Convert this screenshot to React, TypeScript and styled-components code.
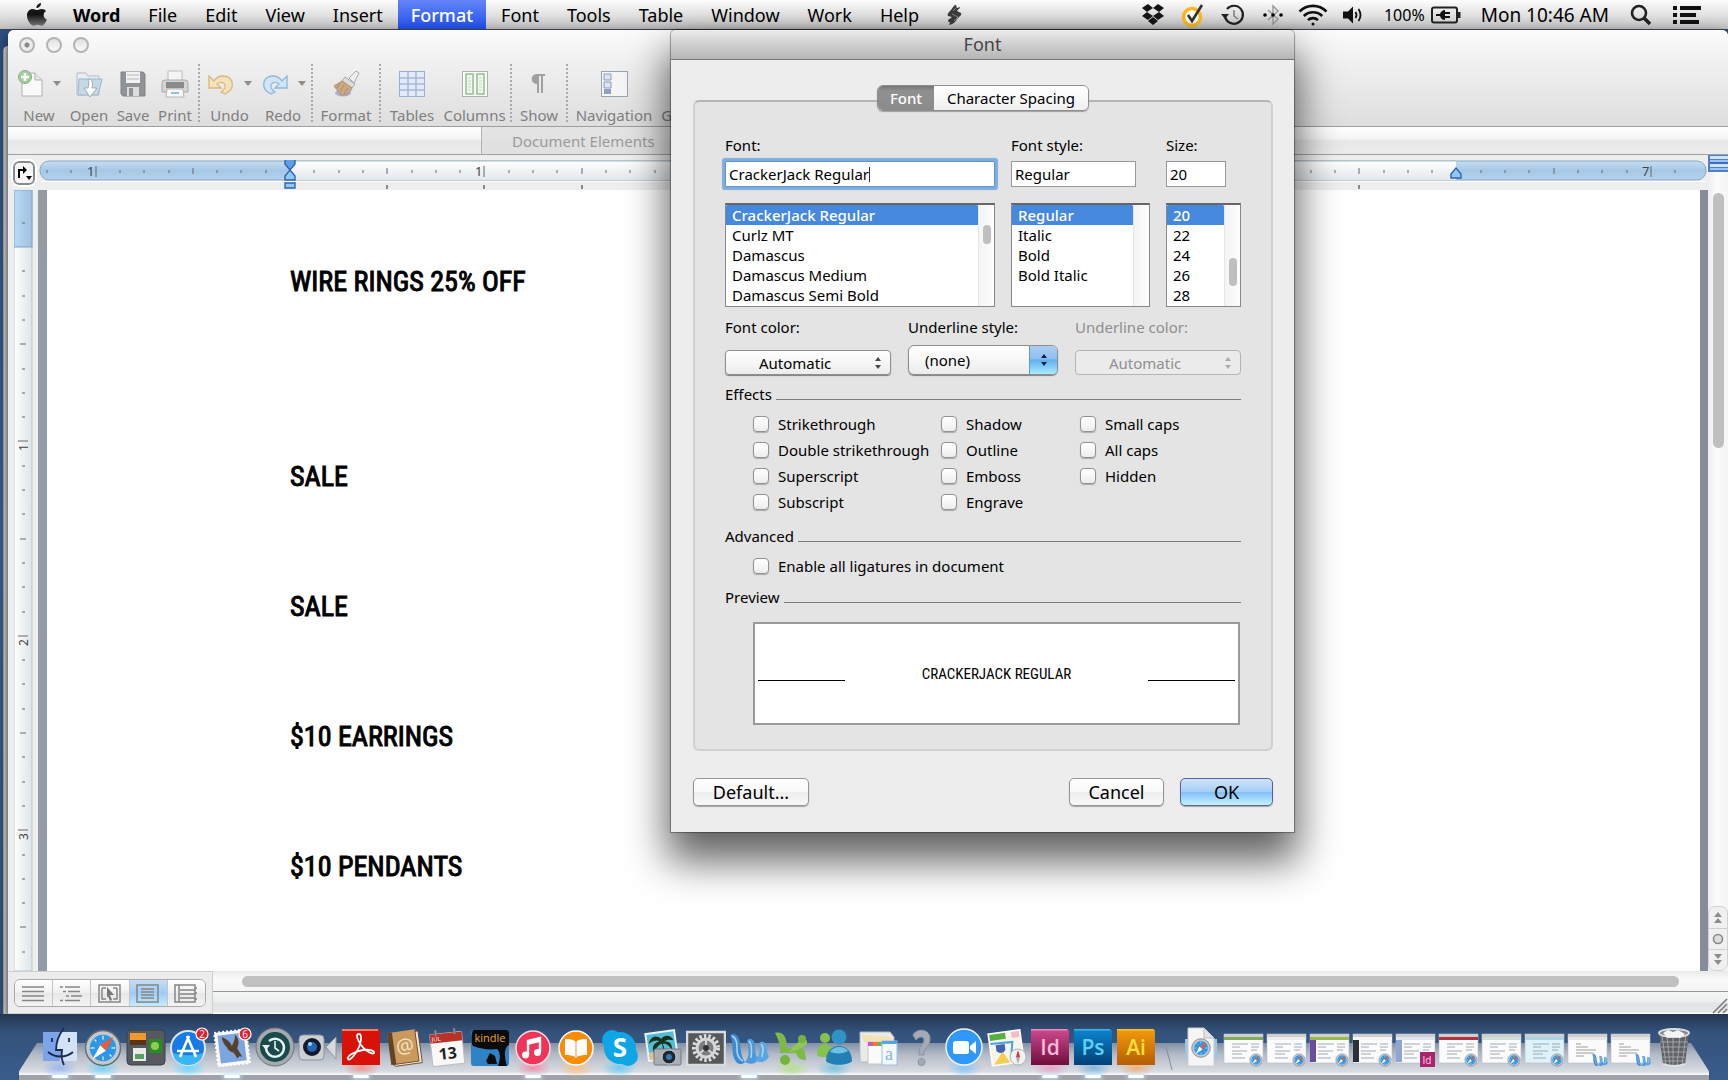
import React from "react";
import styled, { createGlobalStyle, css } from "styled-components";

const UI = `"Noto Sans", "Open Sans", "DejaVu Sans", sans-serif`;
const POSTER = `"Liberation Sans Narrow", "Roboto Condensed", "Liberation Sans", sans-serif`;

const GlobalStyle = createGlobalStyle`
  * { box-sizing: border-box; }
  body { margin: 0; font-family: ${UI}; color: #000; overflow: hidden; }
  button, input, select { font: inherit; color: inherit; margin: 0; }
  svg { display: block; flex: none; }
`;

/* ---------- Desktop ---------- */

const Desktop = styled.div`
  position: relative;
  min-height: 100vh;
  display: flex;
  flex-direction: column;
  background: linear-gradient(#2d5183, #3c6297 50%, #34567f 94%, #3c5f92);
`;

const MenuBar = styled.header`
  height: 30px;
  flex: none;
  display: flex;
  align-items: stretch;
  justify-content: space-between;
  background: linear-gradient(#fdfdfd, #e2e2e2 50%, #c3c3c3);
  border-bottom: 1px solid #3f4a55;
`;

const MenuGroup = styled.nav`
  display: flex;
  align-items: stretch;
  gap: 2px;
  padding-left: 24px;
`;

const MenuItem = styled.button<{ $bold?: boolean; $active?: boolean }>`
  border: 0;
  padding: 0 13px;
  font-size: 18px;
  line-height: 28px;
  font-weight: ${(p) => (p.$bold ? 700 : 400)};
  background: none;
  ${(p) =>
    p.$active &&
    css`
      color: #fff;
      font-weight: 500;
      background: linear-gradient(#6585f7, #2050f0);
    `}
`;

const IconButton = styled.button`
  border: 0;
  background: none;
  padding: 0;
  display: flex;
  align-items: center;
  justify-content: center;
`;

const AppleButton = styled(IconButton)`
  width: 34px;
  padding-right: 9px;
`;

const StatusGroup = styled.div`
  display: flex;
  align-items: center;
  padding-right: 21px;
`;

const StatusIcon = styled(IconButton)<{ $wide?: boolean }>`
  width: ${(p) => (p.$wide ? 52 : 40)}px;
`;

const Percent = styled.span`
  font-size: 16px;
  margin: 0 6px 0 11px;
`;

const Clock = styled.span`
  font-size: 19px;
  line-height: 28px;
  margin: 0 6px 0 20px;
`;

/* ---------- Document window ---------- */

const WindowStack = styled.main`
  flex: 1;
  display: flex;
  min-height: 0;
  padding-left: 3px;
`;

const BackWindowEdge = styled.div`
  width: 5px;
  margin-top: 16px;
  border-radius: 5px 0 0 0;
  background: linear-gradient(90deg, #9a9a9a, #e4e4e4 30%, #bdbdbd);
`;

const WordWindow = styled.section`
  flex: 1;
  min-width: 0;
  display: flex;
  flex-direction: column;
  background: #eee;
  border-radius: 6px 6px 0 0;
  box-shadow: 0 6px 16px rgba(0, 0, 0, 0.7);
`;

const WindowTop = styled.div`
  height: 97px;
  flex: none;
  display: flex;
  flex-direction: column;
  background: linear-gradient(#fbfbfb, #ededed 45%, #dedede);
  border-bottom: 1px solid #9d9d9d;
  border-radius: 6px 6px 0 0;
`;

const Lights = styled.div`
  display: flex;
  gap: 11px;
  padding: 7px 0 0 11px;
  height: 33px;
`;

const Light = styled.button<{ $dot?: boolean }>`
  width: 16px;
  height: 16px;
  padding: 0;
  border-radius: 50%;
  border: 2px solid #b4b4b4;
  background: ${(p) =>
    p.$dot
      ? "radial-gradient(circle, #888 2px, #ececec 3px)"
      : "linear-gradient(#e0e0e0, #fafafa)"};
`;

const Tools = styled.div`
  flex: 1;
  display: flex;
  padding-left: 4px;
  overflow: hidden;
`;

const Tool = styled.button<{ $w: number }>`
  width: ${(p) => p.$w}px;
  flex: none;
  border: 0;
  padding: 6px 0 0;
  background: none;
  display: flex;
  flex-direction: column;
  align-items: center;
  gap: 7px;
  color: #7f7f7f;
  font-size: 15px;
  line-height: 20px;
`;

const ToolIcon = styled.span`
  display: flex;
  align-items: center;
  justify-content: center;
  gap: 9px;
  height: 29px;
`;

const Caret = styled.span`
  border: 4px solid transparent;
  border-top: 5px solid #8d8d8d;
  border-bottom: 0;
`;

const Divider = styled.span`
  flex: none;
  width: 2px;
  height: 58px;
  margin: 1px 2px;
  border-left: 2px dotted #aaa;
`;

const ElementsBar = styled.div`
  height: 28px;
  flex: none;
  display: flex;
  justify-content: flex-start;
  background: linear-gradient(#fff, #f4f4f4 45%, #e8e8e8 50%, #ebebeb);
  border-bottom: 1px solid #a0a0a0;
`;

const ElementsTab = styled.button`
  margin-left: 473px;
  border: 0;
  border-left: 1px solid #b2b2b2;
  padding: 0 30px;
  background: linear-gradient(90deg, rgba(222, 222, 222, 0.8), rgba(222, 222, 222, 0.8) 200px, transparent 800px);
  color: #9b9b9b;
  font-size: 15px;
  line-height: 28px;
  white-space: nowrap;
  flex: 1;
  text-align: left;
`;

const Body = styled.div`
  flex: 1;
  min-height: 0;
  display: flex;
`;

const Work = styled.div`
  flex: 1;
  min-width: 0;
  display: flex;
  flex-direction: column;
`;

const RulerRow = styled.div`
  display: flex;
  height: 35px;
  flex: none;
  padding: 5px 0 0 5px;
  gap: 4px;
`;

const TabPicker = styled.button`
  width: 22px;
  height: 24px;
  margin: 1px 0 0;
  padding: 0;
  border: 2px solid #8a8a8a;
  border-radius: 6px;
  background: #f6f6f6;
  outline: 2px solid #fff;
  display: flex;
  align-items: center;
  justify-content: center;
`;

const RulerBox = styled.div`
  flex: 1;
  min-width: 0;
  overflow: hidden;
`;

const Canvas = styled.div`
  flex: 1;
  min-height: 0;
  display: flex;
`;

const SideRuler = styled.div`
  width: 30px;
  overflow: hidden;
  padding-left: 6px;
`;

const Page = styled.article`
  flex: 1;
  background: #fff;
  border-left: 9px solid #949aa6;
  border-right: 8px solid #868d99;
  padding: 59px 0 0 243px;
  font-family: ${POSTER};
  font-size: 28px;
`;

const Line = styled.p`
  margin: 0;
  height: 65px;
  line-height: 65px;
  -webkit-text-stroke: 1px #000;
`;

const ScrollColumn = styled.aside`
  width: 20px;
  display: flex;
  flex-direction: column;
  align-items: center;
  background: linear-gradient(90deg, #ededed, #fbfbfb 40%, #f5f5f5);
`;

const SplitHandle = styled.button`
  width: 20px;
  height: 17px;
  padding: 0;
  border: 2px solid #4c80ca;
  border-width: 1px 0 2px 2px;
  background: repeating-linear-gradient(#cfe4fb 0 3px, #4c80ca 3px 4px, #9cc4f2 4px 6px, #3c6fc2 6px 8px);
`;

const VThumb = styled.div`
  width: 11px;
  height: 255px;
  margin-top: 21px;
  border-radius: 6px;
  background: #bfbfbf;
`;

const Browse = styled.div`
  margin-top: auto;
  width: 20px;
  border: 1px solid #d2d2d2;
  border-radius: 7px;
  background: #f0f0f0;
  display: flex;
  flex-direction: column;
`;

const BrowseButton = styled(IconButton)`
  height: 21px;
  & + & {
    border-top: 1px solid #d0d0d0;
  }
`;

const Bottom = styled.footer`
  height: 43px;
  flex: none;
  display: flex;
`;

const Views = styled.div`
  width: 205px;
  border: 1px solid #cfcfcf;
  border-left: 0;
  background: #ececec;
  padding: 7px 6px 0 6px;
`;

const ViewGroup = styled.div`
  height: 28px;
  display: flex;
  border: 1px solid #aaa;
  border-radius: 6px;
  overflow: hidden;
`;

const ViewButton = styled(IconButton)<{ $on?: boolean }>`
  flex: 1;
  background: ${(p) =>
    p.$on
      ? "linear-gradient(#c7ddf5, #9fccf3 50%, #c4ecff)"
      : "linear-gradient(#fff, #f0f0f0 50%, #e8e8e8 52%, #f4f4f4)"};
  & + & {
    border-left: 1px solid #c4c4c4;
  }
`;

const BottomRight = styled.div`
  flex: 1;
  display: flex;
  flex-direction: column;
`;

const HTrack = styled.div`
  height: 21px;
  padding: 5px 49px 5px 29px;
  background: linear-gradient(#e9e9e9, #fafafa 40%, #f5f5f5);
  border-bottom: 1px solid #989898;
`;

const HThumb = styled.div`
  height: 11px;
  border-radius: 6px;
  background: #c0c0c0;
`;

const StatusBar = styled.div`
  flex: 1;
  display: flex;
  justify-content: flex-end;
  align-items: flex-end;
  background: linear-gradient(#f4f5f5, #eceeef 45%, #e1e3e5 50%, #e4e6e7 92%, #fff 96%);
`;

/* ---------- Font dialog ---------- */

const Dialog = styled.section`
  position: absolute;
  top: 30px;
  left: 671px;
  width: 623px;
  background: #ededed;
  border-radius: 5px 5px 0 0;
  box-shadow: 0 0 1px 1px rgba(0, 0, 0, 0.35), 0 25px 40px 4px rgba(0, 0, 0, 0.62);
  font-size: 15px;
  line-height: 20px;
`;

const DialogTitle = styled.h1`
  margin: 0;
  height: 30px;
  border-bottom: 1px solid #747474;
  border-radius: 5px 5px 0 0;
  background: linear-gradient(#ececec, #cfcfcf 50%, #b5b5b5);
  color: #454545;
  text-align: center;
  font-size: 18px;
  font-weight: 400;
  line-height: 29px;
`;

const DialogBody = styled.form`
  padding: 25px 21px 26px 22px;
`;

const TabRow = styled.div`
  position: relative;
  z-index: 1;
  display: flex;
  width: 212px;
  height: 26px;
  margin: 0 auto -11px;
  border: 1px solid #8d8d8d;
  border-radius: 6px;
  overflow: hidden;
  box-shadow: 0 1px 1px rgba(0, 0, 0, 0.3);
`;

const TabButton = styled.button<{ $on?: boolean }>`
  border: 0;
  padding: 0;
  flex: ${(p) => (p.$on ? "0 0 56px" : "1")};
  line-height: 23px;
  white-space: nowrap;
  font-weight: ${(p) => (p.$on ? 500 : 400)};
  color: ${(p) => (p.$on ? "#fff" : "#000")};
  background: ${(p) =>
    p.$on ? "linear-gradient(#757575, #909090 20%, #8b8b8b)" : "linear-gradient(#fff, #f8f8f8 50%, #efefef)"};
`;

const Panel = styled.div`
  border: 2px solid #d0d0d0;
  border-top-color: #b4b4b4;
  border-radius: 6px;
  background: #e4e4e4;
  padding: 33px 30px 24px 30px;
`;

const Fields = styled.div`
  display: grid;
  grid-template-columns: 270px 139px 75px;
  column-gap: 16px;
`;

const Field = styled.div`
  display: flex;
  flex-direction: column;
`;

const Label = styled.label<{ $dim?: boolean }>`
  color: ${(p) => (p.$dim ? "#8f8f8f" : "#000")};
  white-space: nowrap;
`;

const TextBox = styled.div<{ $right?: number; $focus?: boolean }>`
  display: flex;
  align-items: center;
  height: 26px;
  margin: 6px ${(p) => p.$right || 0}px 16px 0;
  padding-left: 3px;
  border: 1px solid #999;
  background: #fff;
  ${(p) =>
    p.$focus &&
    css`
      border-color: #5d95cd;
      border-radius: 1px;
      box-shadow: 0 0 1px 3px rgba(94, 155, 216, 0.75);
    `}
`;

const TextInput = styled.input`
  border: 0;
  outline: 0;
  padding: 0;
  background: none;
  field-sizing: content;
  max-width: 100%;
`;

const InsertionPoint = styled.i`
  width: 1px;
  height: 15px;
  background: #333;
`;

const ListBox = styled.div`
  display: flex;
  height: 104px;
  border: 1px solid #888;
  border-top: 2px solid #666;
  background: #fff;
`;

const List = styled.select`
  flex: 1;
  min-width: 0;
  height: 101px;
  padding: 0;
  border: 0;
  outline: 0;
  overflow: hidden;
  background: #fff;
  scrollbar-width: none;
  option {
    padding: 0 6px;
    min-height: 20px;
    height: 20px;
    line-height: 20px;
  }
  option:checked {
    color: #fff;
    font-weight: 500;
    background: #4688de linear-gradient(#4688de, #4688de);
  }
`;

const ListTrack = styled.div<{ $top?: number }>`
  width: 16px;
  border-left: 1px solid #e6e6e6;
  background: linear-gradient(90deg, #f4f4f4, #fdfdfd);
  padding: ${(p) => p.$top || 0}px 3px 0 4px;
`;

const ListThumb = styled.div<{ $h: number }>`
  height: ${(p) => p.$h}px;
  border-radius: 4px;
  background: #bfbfbf;
`;

const Popups = styled.div`
  display: grid;
  grid-template-columns: 166px 150px 166px;
  column-gap: 17px;
  padding-top: 10px;
`;

const PopupShell = styled.div<{ $kind?: "aqua" | "dim" }>`
  display: flex;
  align-items: center;
  height: ${(p) => (p.$kind === "aqua" ? 30 : 25)}px;
  margin-top: ${(p) => (p.$kind === "aqua" ? 8 : 13)}px;
  border: 1px solid ${(p) => (p.$kind === "dim" ? "#b4b4b4" : "#8f8f8f")};
  border-radius: ${(p) => (p.$kind === "aqua" ? 6 : 4)}px;
  background: ${(p) => (p.$kind === "dim" ? "#ebebeb" : "linear-gradient(#fff, #f6f6f6 50%, #ececec)")};
  color: ${(p) => (p.$kind === "dim" ? "#909090" : "#000")};
  box-shadow: ${(p) => (p.$kind === "dim" ? "none" : "0 1px 1px rgba(0,0,0,.45)")};
  overflow: hidden;
`;

const Popup = styled.select<{ $pad: number }>`
  flex: 1;
  min-width: 0;
  height: 100%;
  appearance: none;
  border: 0;
  outline: 0;
  opacity: 1;
  padding: 0 0 0 ${(p) => p.$pad}px;
  background: none;
  color: inherit;
`;

const PopupArrows = styled.span<{ $aqua?: boolean }>`
  display: flex;
  align-items: center;
  justify-content: center;
  height: 100%;
  width: ${(p) => (p.$aqua ? 28 : 24)}px;
  color: ${(p) => (p.$aqua ? "#10203a" : "inherit")};
  opacity: ${(p) => (p.$aqua ? 1 : 0.7)};
  background: ${(p) => (p.$aqua ? "linear-gradient(#a9cdf3, #8fc0f2 45%, #62aef0 50%, #a8ecff)" : "none")};
  border-left: ${(p) => (p.$aqua ? "1px solid #6595ce" : "0")};
`;

const SectionTitle = styled.h2<{ $top: number }>`
  margin: ${(p) => p.$top}px 0 0;
  display: flex;
  align-items: flex-end;
  gap: 4px;
  font-size: 15px;
  font-weight: 400;
  line-height: 20px;
  &::after {
    content: "";
    flex: 1;
    height: 2px;
    margin-bottom: 4px;
    border-bottom: 1px solid #7d7d7d;
  }
`;

const Effects = styled.div`
  display: grid;
  grid-template-columns: 188px 139px 1fr;
  grid-template-rows: repeat(4, 26px);
  grid-auto-flow: column;
  padding: 7px 0 0 28px;
`;

const Check = styled.label`
  display: flex;
  align-items: center;
  gap: 9px;
  height: 26px;
  white-space: nowrap;
`;

const CheckBox = styled.input`
  appearance: none;
  width: 16px;
  height: 16px;
  flex: none;
  border: 1px solid #929292;
  border-radius: 4px;
  background: linear-gradient(#fff, #f7f7f7 50%, #ececec);
  box-shadow: 0 1px 1px rgba(0, 0, 0, 0.25);
`;

const Advanced = styled.div`
  padding: 7px 0 0 28px;
`;

const Preview = styled.div`
  display: flex;
  align-items: center;
  justify-content: space-between;
  height: 103px;
  margin: 15px 1px 0 28px;
  padding: 0 3px;
  border: 2px solid #9a9a9a;
  background: #fff;
  font-family: ${POSTER};
  font-size: 15px;
`;

const Baseline = styled.span`
  width: 87px;
  height: 1px;
  margin-top: 14px;
  background: #000;
`;

const Buttons = styled.div`
  display: flex;
  gap: 16px;
  padding-top: 27px;
`;

const PushButton = styled.button<{ $w: number; $primary?: boolean; $start?: boolean }>`
  width: ${(p) => p.$w}px;
  height: 28px;
  padding: 0;
  margin-right: ${(p) => (p.$start ? "auto" : "0")};
  border: 1px solid ${(p) => (p.$primary ? "#5762a8" : "#949494")};
  border-radius: 5px;
  font-size: 18px;
  line-height: 24px;
  background: ${(p) =>
    p.$primary
      ? "linear-gradient(#cfe3fa, #a6cff8 48%, #84c0f8 52%, #c3f4ff)"
      : "linear-gradient(#fff, #f8f8f8 48%, #eee 52%, #f8f8f8)"};
  box-shadow: 0 1px 1px rgba(0, 0, 0, 0.3);
`;

/* ---------- Dock ---------- */

const DockBar = styled.nav`
  position: relative;
  height: 66px;
  flex: none;
  display: flex;
  padding: 13px 32px 0 38px;
  background: linear-gradient(#24364f, #34537c 28%, #3a5c8b);
  &::before {
    content: "";
    position: absolute;
    inset: 29px 19px 5px;
    background: linear-gradient(#8190a6, #b3bac6 35%, #d9dde3 90%, #fff);
    clip-path: polygon(18px 0, calc(100% - 18px) 0, 100% 88%, 100% 100%, 0 100%, 0 88%);
  }
  &::after {
    content: "";
    position: absolute;
    inset: 61px 19px 0;
    background: #9fa3a9;
  }
`;

const DockItem = styled.button<{ $glow?: string; $running?: boolean }>`
  position: relative;
  z-index: 1;
  flex: 1;
  min-width: 0;
  height: 53px;
  padding: 0;
  border: 0;
  background: ${(p) =>
    p.$glow ? `radial-gradient(ellipse 18px 9px at 50% 41px, ${p.$glow}, transparent)` : "none"};
  display: flex;
  flex-direction: column;
  align-items: center;
  justify-content: space-between;
  &::after {
    content: "";
    width: 16px;
    height: 3px;
    margin-bottom: 2px;
    border-radius: 2px;
    ${(p) => p.$running && "background: #fff; box-shadow: 0 0 4px 1px #bfe6ff;"}
  }
`;

const DockGap = styled.span`
  position: relative;
  z-index: 1;
  width: 21px;
  display: flex;
  justify-content: center;
  padding-top: 20px;
`;

/* ---------- Small drawings ---------- */

const Apple = () => (
  <svg width="22" height="26" viewBox="0 0 22 26">
    <defs>
      <linearGradient id="ap" x1="0" y1="0" x2="0" y2="1">
        <stop offset="0" stopColor="#222" />
        <stop offset=".5" stopColor="#111" />
        <stop offset="1" stopColor="#777" />
      </linearGradient>
    </defs>
    <path d="M15 1c.3 2.600-2 5.200-4.500 5C10.200 3.500 12.500 1.200 15 1zM20 9c-3.500 2-3 7 .8 8.500-1 3-3 6.200-5.300 6.200-1.500 0-2-.9-3.900-.9s-2.500.9-4 .9C4.500 23.700 1 18 1 13.500 1 9.500 3.600 7 6.700 7c1.700 0 3 1.100 4.300 1.100C12.200 8.100 13.700 7 16 7c1.600 0 3.100.8 4 2z" fill="url(#ap)" />
  </svg>
);

const ScriptGlyph = () => (
  <svg width="18" height="24" viewBox="0 0 18 24">
    <path d="M11 2C9 2 8 4 6 7 3 10 2 11 3 13l4 1c-2 2-4 2-4 4 0 1 1 1 2 1l-1 3c5-1 7-4 8-6 3-3 5-4 4-6l-4-2c1-2 3-2 3-4L12 5z" fill="#3a3a3a" />
    <path d="m7 11 6 3-4 4M8 8l4-4" stroke="#999" fill="none" strokeWidth=".8" />
  </svg>
);

const Dropbox = () => (
  <svg width="24" height="22" viewBox="0 0 24 22" fill="#151515">
    <path d="m7 0 5 4-6 4L1 4zM17 0l-5 4 6 4 5-4zM6 8l6 4-5 4-6-4zM18 8l-6 4 5 4 6-4zM12 13l5 4-5 4-5-4z" />
  </svg>
);

const Norton = () => (
  <svg width="24" height="26" viewBox="0 0 24 26">
    <circle cx="11" cy="15" r="8.500" fill="#fff" stroke="#fdbb1e" strokeWidth="3.500" />
    <path d="m7 13 4 6L21 3" stroke="#333" strokeWidth="2.600" fill="none" />
  </svg>
);

const TimeMachineGlyph = () => (
  <svg width="24" height="24" viewBox="0 0 24 24" fill="none" stroke="#222" strokeWidth="2.200">
    <path d="M4 13a9 9 0 1 0 2-7" />
    <path d="m0 11 4 5 4-5z" fill="#222" stroke="none" />
    <path d="M13 7v6l4 3" strokeWidth="1.400" stroke="#777" />
  </svg>
);

const Bluetooth = () => (
  <svg width="20" height="24" viewBox="0 0 20 24">
    <path d="m5 7 10 9-5 5V3l5 5-10 9" stroke="#999" strokeWidth="1.400" fill="none" />
    <circle cx="2" cy="12" r="1.800" />
    <circle cx="10" cy="12" r="1.800" />
    <circle cx="18" cy="12" r="1.800" />
  </svg>
);

const Wifi = () => (
  <svg width="30" height="22" viewBox="0 0 30 22" fill="none" stroke="#111" strokeWidth="2.600">
    <path d="M1.500 7.500a19 19 0 0 1 27 0M5.800 12a13 13 0 0 1 18.400 0M10 16.200a7 7 0 0 1 10 0" />
    <circle cx="15" cy="20" r="1.500" fill="#111" stroke="none" />
  </svg>
);

const Volume = () => (
  <svg width="22" height="20" viewBox="0 0 22 20">
    <path d="M1 6.500h5l5-5v17l-5-5H1z" fill="#111" />
    <path d="M13.500 7q2 3 0 6M16.500 4q4 6 0 12" stroke="#111" strokeWidth="1.800" fill="none" />
  </svg>
);

const Battery = () => (
  <svg width="30" height="18" viewBox="0 0 30 18">
    <rect x="1" y="1.500" width="25" height="15" rx="2" fill="none" stroke="#222" strokeWidth="2" />
    <rect x="27" y="6" width="2.500" height="6" fill="#222" />
    <path d="M5 8h4c1-3 3-4 5-4v2h5v2h-5v2h5v2h-5v2c-2 0-4-1-5-4H5z" fill="#111" />
  </svg>
);

const Search = () => (
  <svg width="22" height="22" viewBox="0 0 22 22" fill="none" stroke="#222" strokeWidth="2.600">
    <circle cx="9" cy="9" r="7" />
    <path d="m14 14 6 6" strokeWidth="3.500" />
  </svg>
);

const ListGlyph = () => (
  <svg width="28" height="20" viewBox="0 0 28 20" fill="#111">
    <path d="M0 1h4v4H0zM0 8h4v4H0zM0 15h4v4H0zM7 1h21v4H7zM7 8h16v4H7zM7 15h19v4H7z" />
  </svg>
);

const toolIcons: Record<string, React.ReactNode> = {
  New: (
    <svg width="26" height="28" viewBox="0 0 26 28">
      <path d="M4 3h13l7 7v16H4z" fill="#fafafa" stroke="#b0b0b0" />
      <path d="M17 3v7h7" fill="#e6e6e6" stroke="#b0b0b0" />
      <circle cx="7" cy="7" r="6.500" fill="#a3cd9d" stroke="#86b083" />
      <path d="M7 3v8M3 7h8" stroke="#fff" strokeWidth="2.500" />
    </svg>
  ),
  Open: (
    <svg width="28" height="28" viewBox="0 0 28 28">
      <path d="M2 3h9l2 3h11v19H2z" fill="#e9edf1" stroke="#b3bdc7" />
      <path d="M4 9h23l-4 16H3z" fill="#c3d9e8" stroke="#9fb8ca" />
      <path d="M13 9c5 0 5 5 4 9h5l-7 9-6-9h4c1-4 1-7 0-9z" fill="#fff" stroke="#aaa" />
    </svg>
  ),
  Save: (
    <svg width="26" height="26" viewBox="0 0 26 26">
      <path d="M1 1h22l2 2v22H3l-2-2z" fill="#8f9296" stroke="#808387" />
      <path d="M6 1h14v11H6z" fill="#f2f2f2" />
      <path d="M7 4h12M7 8h12" stroke="#b5b5b5" />
      <path d="M7 16h12v9H7z" fill="#dcdcdc" />
      <path d="M9 17h4v8H9z" fill="#8f9296" />
    </svg>
  ),
  Print: (
    <svg width="28" height="28" viewBox="0 0 28 28">
      <path d="M7 1h14v11H7z" fill="#f4f4f4" stroke="#bbb" />
      <path d="M1 13q0-3 3-3h20q3 0 3 3v9H1z" fill="#d4d4d4" stroke="#aaa" />
      <path d="M5 12h18v6H5z" fill="#8a8a8a" />
      <path d="M6 19h16l1 8H5z" fill="#fafafa" stroke="#b5b5b5" />
      <path d="M10 22h8v2h-8z" fill="#8fc6dd" />
    </svg>
  ),
  Undo: (
    <svg width="28" height="22" viewBox="0 0 28 22">
      <path d="M2 3v12h12l-4-4c7-5 12 3 4 8l4 2C29 16 27 3 16 3c-4 0-7 2-9 5z" fill="#f4e2bb" stroke="#d8b880" strokeWidth="1.300" />
    </svg>
  ),
  Redo: (
    <svg width="28" height="22" viewBox="0 0 28 22">
      <path d="M26 3v12H14l4-4C11 6 6 14 14 19l-4 2C-1 16 1 3 12 3c4 0 7 2 9 5z" fill="#d0e6f6" stroke="#8fb8da" strokeWidth="1.300" />
    </svg>
  ),
  Format: (
    <svg width="28" height="28" viewBox="0 0 28 28">
      <ellipse cx="11" cy="23" rx="8" ry="3.500" fill="#aab0e0" />
      <path d="m17 8 7-7 3 2-5 10z" fill="#eee" stroke="#aaa" />
      <path d="m13 7 10 7-3 4-10-7z" fill="#dcdcdc" stroke="#aaa" />
      <path d="m10 11 10 7c-2 5-6 8-11 7L2 16z" fill="#cba985" stroke="#b29274" />
      <path d="m8 13-3 5m7-3-4 7m8-4-4 6" stroke="#a98a6d" />
    </svg>
  ),
  Tables: (
    <svg width="26" height="26" viewBox="0 0 26 26">
      <rect x=".5" y=".5" width="25" height="25" fill="#e2ebf7" stroke="#98aed2" />
      <path d="M9 1v25M17 1v25M1 7h25M1 13h25M1 19h25" stroke="#a5b9dc" strokeWidth="1.500" />
    </svg>
  ),
  Columns: (
    <svg width="26" height="26" viewBox="0 0 26 26">
      <rect x=".5" y=".5" width="25" height="25" fill="#fafafa" stroke="#aab5aa" />
      <path d="M4 3h7v20H4zM15 3h7v20h-7z" fill="#f1f8ef" stroke="#91bf8c" strokeWidth="1.500" />
      <path d="M6 7h3M6 10h3M6 13h3M6 16h3M6 19h3M17 7h3M17 10h3M17 13h3M17 16h3M17 19h3" stroke="#bcd9b9" />
    </svg>
  ),
  Show: (
    <svg width="16" height="22" viewBox="0 0 16 22">
      <path d="M14 1v2h-2v17h-2V3H8v17H6v-9C-1 11-1 1 6 1z" fill="#a0a0a0" />
    </svg>
  ),
  Navigation: (
    <svg width="27" height="26" viewBox="0 0 27 26">
      <rect x=".5" y=".5" width="26" height="25" fill="#f5f5f5" stroke="#9aa3b5" />
      <path d="M3 3h7v6H3zM3 11h7v6H3z" fill="#dbe4f3" stroke="#8c9cbd" />
      <path d="M3 18h7v5H3z" fill="#8ea0c8" />
    </svg>
  ),
};

const tools: Array<{ name: string; w: number; caret?: boolean; gap?: boolean }> = [
  { name: "New", w: 54, caret: true },
  { name: "Open", w: 46 },
  { name: "Save", w: 42 },
  { name: "Print", w: 42, gap: true },
  { name: "Undo", w: 55, caret: true },
  { name: "Redo", w: 52, caret: true, gap: true },
  { name: "Format", w: 62, gap: true },
  { name: "Tables", w: 58 },
  { name: "Columns", w: 67, gap: true },
  { name: "Show", w: 50, gap: true },
  { name: "Navigation", w: 88 },
  { name: "Gallery", w: 56 },
];

/* Rulers: 24.3 px per eighth of an inch */
const EIGHTH = 24.3;

const HorizontalRuler = () => {
  const zero = 251;
  const marks = Array.from({ length: 70 }, (_, i) => i - 10);
  const x = (k: number) => Math.round(zero + k * EIGHTH);
  return (
    <svg width="100%" height="30" fontSize="13" fontFamily="Noto Sans, sans-serif">
      <defs>
        <linearGradient id="rb" x1="0" y1="0" x2="0" y2="1">
          <stop offset="0" stopColor="#c5dff4" />
          <stop offset=".5" stopColor="#a6c8e6" />
          <stop offset="1" stopColor="#b3d2ec" />
        </linearGradient>
        <linearGradient id="rw" x1="0" y1="0" x2="0" y2="1">
          <stop offset="0" stopColor="#fff" />
          <stop offset="1" stopColor="#e2e8ec" />
        </linearGradient>
      </defs>
      <rect x="1" y="1" width="1666" height="19" rx="9" fill="url(#rb)" stroke="#8aa9c8" />
      <rect x={zero} y="1" width="1166" height="19" fill="url(#rw)" />
      <path d={`M${zero} 1h1166`} stroke="#b0bac4" />
      <path d="M2 21.500h1664" stroke="#fff" />
      {marks.map((k) => {
        const at = x(k);
        if (k === 0 || k === 48 || at > 1658) return null;
        if (k % 8 === 0)
          return (
            <g key={k}>
              <path d={`M${at} 6v11`} stroke="#666" />
              {[-8, 8, 56].includes(k) && (
                <text x={at - 9} y="16" fill="#444">
                  {Math.abs(k / 8)}
                </text>
              )}
            </g>
          );
        return <path key={k} d={k % 4 === 0 ? `M${at} 8v6` : `M${at} 10v3`} stroke="#667" />;
      })}
      {marks
        .filter((k) => k > 0 && k < 48 && k % 4 === 0)
        .map((k) => (
          <path key={k} d={`M${x(k)} 25v4`} stroke="#667" strokeWidth="1.500" />
        ))}
      <g stroke="#2f64ab" strokeWidth="1.400" fill="#8ec7f8">
        <path d={`M${zero - 5} -1h10v5l-5 6-5-6z`} fill="#5d9fe8" />
        <path d={`M${zero} 10l5 6v4h-10v-4z`} />
        <path d={`M${zero - 5} 23h10v5h-10z`} />
        <path d={`M${zero + 1166} 8l5 6v4h-10v-4z`} />
      </g>
    </svg>
  );
};

const VerticalRuler = () => {
  const zero = 57;
  const marks = Array.from({ length: 34 }, (_, i) => i - 2);
  return (
    <svg width="19" height="781" fontSize="12" fontFamily="Noto Sans, sans-serif">
      <defs>
        <linearGradient id="vb">
          <stop offset="0" stopColor="#b9dbf5" />
          <stop offset="1" stopColor="#9fc0df" />
        </linearGradient>
        <linearGradient id="vw">
          <stop offset="0" stopColor="#fff" />
          <stop offset="1" stopColor="#dde4e8" />
        </linearGradient>
      </defs>
      <rect width="18" height="781" fill="url(#vw)" stroke="#bcc3c8" />
      <rect width="18" height={zero} fill="url(#vb)" stroke="#7fa5c9" />
      {marks.map((k) => {
        const at = Math.round(zero + k * EIGHTH);
        if (k === 0 || at < 10) return null;
        if (k % 8 === 0)
          return (
            <g key={k}>
              <path d={`M4 ${at}h10`} stroke="#666" />
              <text transform={`translate(14 ${at + 10}) rotate(-90)`} fill="#444">
                {k / 8}
              </text>
            </g>
          );
        return <path key={k} d={k % 4 === 0 ? `M6 ${at}h6` : `M8 ${at}h3`} stroke="#666" />;
      })}
    </svg>
  );
};

const viewIcons: Array<[string, React.ReactNode]> = [
  ["Draft view", <path key="p" d="M0 3h22M0 7.500h22M0 12h22M0 16.500h22" />],
  ["Outline view", <path key="p" d="M0 3h3m2 0h15M3 7.500h3m2 0h12M6 12h3m2 0h11M0 16.500h3m2 0h15" />],
  [
    "Publishing layout view",
    <g key="p">
      <path d="M1 1h21v17H1zM4 4h4M15 4h4M4 4v11h4M19 4v11h-4" />
      <path d="m9 3 7 8h-4l2 5-2 1-2-5-1 2z" fill="#777" stroke="none" />
    </g>,
  ],
  ["Print layout view", <path key="p" d="M1 1h21v17H1zM5 5h13M5 8h13M5 11h13M5 14h13" />],
  ["Notebook layout view", <path key="p" d="M1 1h20v17H1zM5 1v17M6 6h15M6 10h15M6 14h15M21 4h2M21 9h2M21 15h2" />],
];

const Arrows = () => (
  <svg width="8" height="14" viewBox="0 0 8 14" fill="currentColor">
    <path d="M4 1l3 4H1zM4 13l3-4H1z" />
  </svg>
);

/* ---------- Dock artwork ---------- */

const Art = ({ children, w = 40 }: { children: React.ReactNode; w?: number }) => (
  <svg width={w} height="40" viewBox={`0 0 ${w} 40`} fontFamily="Open Sans, Noto Sans, sans-serif">
    {children}
  </svg>
);

const Compass = ({ x, y, r }: { x: number; y: number; r: number }) => (
  <g transform={`translate(${x} ${y}) scale(${r / 18})`}>
    <circle r="16" fill="#2e96e6" stroke="#c3c8cd" strokeWidth="4" />
    <circle r="18.500" fill="none" stroke="#666c72" strokeWidth="1.500" />
    <path d="M0-13v4M0 9v4M-13 0h4M9 0h4M-9-9l2 2M9 9l-2-2M-9 9l2-2" stroke="#cfeaff" strokeWidth="1.500" />
    <path d="M11-12 3 3-3-3z" fill="#f05a2c" />
    <path d="M-11 12-3-3 3 3z" fill="#fff" />
  </g>
);

const Badge = ({ n }: { n: number }) => (
  <g>
    <circle cx="33" cy="7" r="6" fill="#e0212b" stroke="#fff" strokeWidth="1.200" />
    <text x="33" y="11" fontSize="10" fill="#fff" textAnchor="middle">
      {n}
    </text>
  </g>
);

const AdobeTile = ({ text, top, bottom, color }: { text: string; top: string; bottom: string; color: string }) => (
  <Art>
    <defs>
      <linearGradient id={`tile${text}`} x1="0" y1="0" x2="0" y2="1">
        <stop offset="0" stopColor={top} />
        <stop offset="1" stopColor={bottom} />
      </linearGradient>
    </defs>
    <path d="M1 2h37v1h1v35H1z" fill={`url(#tile${text})`} />
    <path d="M1 2h36v1.500H1z" fill={color} opacity=".6" />
    <text x="20" y="28" fontSize="21" fontWeight="600" fill={color} textAnchor="middle">
      {text}
    </text>
  </Art>
);

/* The Office "W": three teeth of falling height joined along a curved foot */
const WordMark = () => (
  <g>
    <path d="M1 6C6 3 10 7 11 14c1 7 1 14 5 19-4 4-9 2-11-4C2 21 5 13 1 6z" fill="#3f8bd0" />
    <path d="M18 11c4-3 8 0 8 7 0 6 1 9 4 12-3 5-9 6-14 3 5-5 4-14 2-22z" fill="#4c99dc" />
    <path d="M30 14c4-3 8 0 8 5 0 4 0 6 2 8-2 6-9 8-14 4 5-4 5-10 4-17z" fill="#5aa6e4" />
    <path d="M3 7c5 2 5 8 5 14 0 5 2 9 6 11M20 12c3 3 3 10 2 17M32 15c3 3 2 8 1 13" stroke="#a9d6f8" strokeWidth="1.500" fill="none" />
  </g>
);

const Thumb = ({ bar, side, page = "#fbfbfb", kind }: { bar: string; side?: string; page?: string; kind: "safari" | "id" | "word" }) => (
  <Art w={42}>
    <rect x="1" y="7" width="39" height="29" fill={page} stroke="#b7bcc2" strokeWidth=".6" />
    <rect x="1" y="7" width="39" height="3" fill="#cfcfcf" />
    <rect x="1" y="10" width="39" height="3" fill={bar} />
    {side && <rect x="1" y="13" width="6" height="22" fill={side} />}
    {kind === "word" ? (
      <path d="M9 17h5M9 20h12M9 23h20M9 26h18M9 29h8" stroke="#888" strokeWidth=".8" />
    ) : (
      <path d="M9 17h16M9 20h8M9 24h15M9 27h10M9 31h13M28 17h8M28 20h8M28 23h6" stroke="#8b94a8" strokeWidth=".8" />
    )}
    {kind === "safari" && <Compass x={33} y={33} r={6} />}
    {kind === "id" && (
      <g>
        <rect x="25" y="25" width="15" height="15" fill="#a8276c" />
        <text x="32" y="37" fontSize="10" fill="#ffd0e8" textAnchor="middle">
          Id
        </text>
      </g>
    )}
    {kind === "word" && (
      <g transform="translate(25 25) scale(.4)">
        <WordMark />
      </g>
    )}
  </Art>
);

const dockApps: Array<{ name: string; art: React.ReactNode; glow?: string; running?: boolean }> = [
  {
    name: "Finder",
    running: true,
    glow: "#9db8f0",
    art: (
      <Art>
        <rect x="3" y="5" width="34" height="29" fill="#7da3e8" />
        <path d="M22 5h15v29H20c1-4 1-8 1-10h-5c0-7 2-14 6-19z" fill="#d3e2f8" />
        <path d="M24 1c-6 8-8 15-8 22h6c-1 6 0 11 2 15M12 11v4M29 11v4M8 25c7 6 18 6 25 0" stroke="#1b2a50" strokeWidth="1.800" fill="none" />
      </Art>
    ),
  },
  { name: "Safari", running: true, glow: "#78d0f4", art: <Art><Compass x={20} y={21} r={17} /></Art> },
  {
    name: "Dashboard",
    art: (
      <Art>
        <rect x="1" y="3" width="38" height="35" rx="4" fill="#565a60" stroke="#3c4046" />
        <rect x="4" y="6" width="16" height="12" fill="#f09a2e" />
        <path d="M4 13h16v5H4z" fill="#5b3213" />
        <rect x="23" y="12" width="13" height="14" fill="#2c8a22" />
        <circle cx="29" cy="19" r="4" fill="#8ccf50" />
        <rect x="7" y="21" width="13" height="13" fill="#e8ece8" />
        <path d="M9 27h9v5H9z" fill="#56a060" />
      </Art>
    ),
  },
  {
    name: "App Store",
    glow: "#6fd8fb",
    art: (
      <Art>
        <circle cx="19" cy="21" r="17" fill="#167be6" stroke="#dfe5ea" strokeWidth="2" />
        <path d="M4 26a15 12 0 0 0 30 0c-8 3-22 3-30 0z" fill="#38b6f6" />
        <path d="m20 9-9 21M18 9l9 21M8 24h22" stroke="#fff" strokeWidth="2.600" />
        <Badge n={2} />
      </Art>
    ),
  },
  {
    name: "Mail",
    running: true,
    art: (
      <Art>
        <g transform="rotate(-7 20 20)">
          <rect x="4" y="4" width="32" height="34" fill="#f8f8f8" stroke="#fff" strokeWidth="2" strokeDasharray="2 2" />
          <rect x="7" y="7" width="26" height="28" fill="#7ea6de" />
          <path d="M11 9c5 2 8 6 9 10 3-4 5-9 4-11 4 4 4 9 1 14l4 9-3-1-2 2-3-6c-3-1-5-3-6-6-2-3-4-6-4-11z" fill="#54412e" />
        </g>
        <Badge n={6} />
      </Art>
    ),
  },
  {
    name: "Time Machine",
    art: (
      <Art>
        <circle cx="20" cy="20" r="17" fill="#1c4a4c" stroke="#a5aaae" strokeWidth="4" />
        <circle cx="20" cy="20" r="19" fill="none" stroke="#6e7377" />
        <g fill="none" stroke="#e3f4f2" strokeWidth="2.400">
          <path d="M11 21a9 9 0 1 0 3-7" />
          <path d="M20 14v7l4 3" strokeWidth="1.600" />
          <path d="m7 18 4 5 4-5z" fill="#e3f4f2" stroke="none" />
        </g>
      </Art>
    ),
  },
  {
    name: "FaceTime",
    art: (
      <Art>
        <rect x="1" y="8" width="25" height="25" rx="4" fill="#cdd0d3" stroke="#8e9296" />
        <path d="m28 20 10-10v22z" fill="#d7dadd" stroke="#94989c" />
        <circle cx="14" cy="20" r="9" fill="#111a2c" />
        <circle cx="14" cy="20" r="5" fill="#2765b8" />
        <circle cx="12" cy="17" r="2" fill="#9bd0ff" />
      </Art>
    ),
  },
  {
    name: "Acrobat",
    running: true,
    glow: "#f0968e",
    art: (
      <Art>
        <path d="M1 2h36l2 1v35H1z" fill="#d81208" />
        <path d="M1 2h36v2H1z" fill="#ff7a65" />
        <path d="M17 7c5-1 3 8 1 13S9 35 7 32s8-8 15-9 12 1 11 3-9-2-13-8-5-10-3-11z" stroke="#fff" strokeWidth="1.800" fill="none" />
      </Art>
    ),
  },
  {
    name: "Contacts",
    art: (
      <Art>
        <g transform="rotate(-8 20 20)">
          <path d="M5 4h28v32H5z" fill="#c99a5b" />
          <path d="M5 4h5v32H5z" fill="#644427" />
          <path d="M33 6h3v32H9l-2-2h26z" fill="#eee6d8" stroke="#5e3c1e" strokeWidth=".8" />
          <text x="21" y="26" fontSize="20" fill="#f3e3c5" textAnchor="middle">
            @
          </text>
        </g>
      </Art>
    ),
  },
  {
    name: "Calendar",
    art: (
      <Art>
        <g transform="rotate(-6 20 20)">
          <rect x="4" y="6" width="32" height="32" rx="1" fill="#f8f8f8" stroke="#bdbdbd" />
          <path d="M4 6h32v9H4z" fill="#b83228" />
          <path d="M10 2v6M29 2v6" stroke="#888" strokeWidth="2" />
          <text x="10" y="13" fontSize="6" fill="#fff" textAnchor="middle">
            JUL
          </text>
          <text x="20" y="32" fontSize="16" fontWeight="700" fill="#222" textAnchor="middle">
            13
          </text>
        </g>
      </Art>
    ),
  },
  {
    name: "Kindle",
    art: (
      <Art>
        <rect x="1" y="3" width="38" height="36" rx="3" fill="#2d83c5" />
        <path d="M4 3h32q3 0 3 3v12c-5 2-5 12-2 21h-9c3-9 2-14-1-17-7 1-16 0-24-3-2-2-2-16 1-16z" fill="#0a0a0a" />
        <path d="m20 26 5 3 2 8h-9l-2-3z" fill="#0a0a0a" />
        <text x="20" y="15" fontSize="11" fill="#f0a63c" textAnchor="middle">
          kindle
        </text>
      </Art>
    ),
  },
  {
    name: "iTunes",
    running: true,
    glow: "#f490a8",
    art: (
      <Art>
        <circle cx="20" cy="21" r="17" fill="#ef3557" stroke="#f6dce2" strokeWidth="1.500" />
        <path d="M15 28V14l12-3v14" stroke="#fff" strokeWidth="2.400" fill="none" />
        <path d="M15 14l12-3v4l-12 3z" fill="#fff" />
        <circle cx="12.500" cy="28" r="3.500" fill="#fff" />
        <circle cx="24.500" cy="25.500" r="3.500" fill="#fff" />
      </Art>
    ),
  },
  {
    name: "iBooks",
    glow: "#f9c388",
    art: (
      <Art>
        <circle cx="20" cy="21" r="17" fill="#fa8c06" stroke="#fff" strokeWidth="1.500" />
        <path d="M20 15c-3-3-7-3-11-3v16c4 0 8 0 11 3 3-3 7-3 11-3V12c-4 0-8 0-11 3z" fill="#fff" />
        <path d="M20 15v15" stroke="#f79a28" />
      </Art>
    ),
  },
  {
    name: "Skype",
    glow: "#71cdf2",
    art: (
      <Art>
        <circle cx="12" cy="13" r="10" fill="#0ea6e6" />
        <circle cx="28" cy="29" r="10" fill="#0ea6e6" />
        <circle cx="20" cy="21" r="16" fill="#0ea6e6" />
        <text x="20" y="30" fontSize="26" fontWeight="700" fill="#fff" textAnchor="middle">
          S
        </text>
      </Art>
    ),
  },
  {
    name: "Photos",
    art: (
      <Art>
        <g transform="rotate(-8 18 18)">
          <rect x="3" y="4" width="31" height="29" fill="#eef3f5" />
          <rect x="5" y="6" width="27" height="25" fill="#52bcd8" />
          <path d="M5 24h27v7H5z" fill="#ddc391" />
          <path d="M19 12c-4-5-10-4-13 3 5-2 8-3 11-1-6 1-9 5-7 11 3-5 5-7 9-8 1 5 0 9-1 14h3c0-6 0-10-1-14 4 0 6 3 8 7 2-6-2-9-6-9 3-2 6-1 9 0-2-6-8-7-12-3z" fill="#17321c" />
        </g>
        <rect x="11" y="22" width="27" height="16" rx="1.500" fill="#aaaeb2" stroke="#747879" />
        <circle cx="26" cy="30" r="7" fill="#20262d" stroke="#d0d3d6" />
        <circle cx="26" cy="30" r="3" fill="#2c7db0" />
      </Art>
    ),
  },
  {
    name: "System Preferences",
    art: (
      <Art>
        <rect x="1" y="5" width="38" height="33" fill="#55585b" stroke="#d9dbdc" strokeWidth="2.500" />
        <circle cx="20" cy="21" r="12" fill="none" stroke="#d9dbdd" strokeWidth="4" strokeDasharray="2.500 2" />
        <circle cx="20" cy="21" r="9" fill="#7b7e81" stroke="#d4d6d8" strokeWidth="3" />
        <path d="M20 12v9l-7 6m7-6 7 6" stroke="#d4d6d8" strokeWidth="2" fill="none" />
        <circle cx="20" cy="21" r="3" fill="#333" />
      </Art>
    ),
  },
  { name: "Word", running: true, art: <Art><g transform="translate(0 2)"><WordMark /></g></Art> },
  {
    name: "Excel",
    glow: "#b9e08f",
    art: (
      <Art>
        <path d="M3 6c8-2 12 4 12 15h13c4 0 5 2 6 12-6 0-8-2-10-7H8C9 18 6 12 3 6z" fill="#7dba45" />
        <path d="M14 26c3 0 5-3 8-7l8-7c6-2 7 6 1 8l-9 4z" fill="#8dc853" />
        <circle cx="13" cy="33" r="5" fill="#72b53a" />
        <circle cx="30" cy="12" r="4" fill="#74b43e" />
      </Art>
    ),
  },
  {
    name: "Messenger",
    glow: "#7ac4e0",
    art: (
      <Art>
        <circle cx="10" cy="11" r="5" fill="#85c34a" />
        <path d="M2 28c0-15 16-15 16 0-3 3-13 3-16 0z" fill="#85c34a" />
        <circle cx="24" cy="10" r="7.500" fill="#2f93c5" />
        <path d="M11 34c0-20 26-20 26 0-4 5-22 5-26 0z" fill="#217fb5" />
        <path d="M15 25c3-6 14-7 18-1-5 3-12 3-18 1z" fill="#6dc0e2" />
      </Art>
    ),
  },
  {
    name: "Documents",
    art: (
      <Art>
        <path d="M2 5h30l4 5v25H2z" fill="#e9ebeb" stroke="#b3b7ba" />
        <path d="m4 8 30 2v5H6z" fill="#f4e3b0" />
        <rect x="10" y="15" width="15" height="22" fill="#fbfbfb" stroke="#c4c8cc" />
        <path d="M10 15h5v4h-5z" fill="#c659c6" />
        <path d="M15 15h5v4h-5z" fill="#f07c30" />
        <path d="M20 15h5v4h-5z" fill="#64b84d" />
        <rect x="24" y="14" width="15" height="24" fill="#f2f8fd" stroke="#9fbfe0" />
        <path d="M24 14h15v3H24z" fill="#58a2e8" />
        <text x="31" y="33" fontSize="18" fill="#8cb4dc" textAnchor="middle" fontFamily="Liberation Serif, serif">
          a
        </text>
      </Art>
    ),
  },
  {
    name: "Missing app",
    art: (
      <Art>
        <path d="M12 8c3-7 18-7 17 5-1 8-6 7-6 15h-5c-1-9 5-10 5-15 0-4-5-4-8 0z" fill="#a4abb7" stroke="#8c94a2" />
        <circle cx="20.500" cy="35" r="3.500" fill="#a4abb7" stroke="#8c94a2" />
      </Art>
    ),
  },
  {
    name: "Zoom",
    glow: "#8cc4f6",
    art: (
      <Art>
        <circle cx="20" cy="20" r="18" fill="#2f98fb" stroke="#f0f4f8" strokeWidth="1.500" />
        <rect x="9" y="14" width="16" height="13" rx="2.500" fill="#fff" />
        <path d="m26 19 6-5v13l-6-5z" fill="#fff" />
      </Art>
    ),
  },
  {
    name: "Maps",
    art: (
      <Art>
        <g transform="rotate(-8 18 20)">
          <rect x="3" y="5" width="32" height="32" fill="#f7f4ea" stroke="#fff" strokeWidth="1.500" />
          <path d="M4 6h16v6H4z" fill="#59ae42" />
          <path d="M26 6h8v6h-8z" fill="#f6bcc6" />
          <path d="m4 15 22 1-4 18" fill="none" stroke="#49a4e8" strokeWidth="2" />
          <path d="m5 36 10-12 6 12z" fill="#f4ce52" />
          <path d="M9 17h9v6q-4 5-9 0z" fill="#4461b4" />
        </g>
        <circle cx="31" cy="30" r="8" fill="#f2f2f2" stroke="#b5b5b5" />
        <path d="m31 23 2 7h-4z" fill="#e0322a" />
        <path d="m31 37 2-7h-4z" fill="#aaa" />
      </Art>
    ),
  },
  { name: "InDesign", running: true, glow: "#e9a6ca", art: <AdobeTile text="Id" top="#cf4a8f" bottom="#6f0e3c" color="#ffb9dd" /> },
  { name: "Photoshop", running: true, glow: "#85b7dc", art: <AdobeTile text="Ps" top="#0b86d0" bottom="#044075" color="#5fd2f8" /> },
  { name: "Illustrator", running: true, glow: "#efb27a", art: <AdobeTile text="Ai" top="#f39a0c" bottom="#b55e06" color="#ffdf3d" /> },
];

const dockDocs: Array<{ name: string; art: React.ReactNode }> = [
  {
    name: "Downloads",
    art: (
      <Art>
        <path d="M4 12h32v20H4z" fill="#9cc6e4" />
        <path d="M7 1h16l10 10v28H7z" fill="#f6f6f6" stroke="#cdcdcd" />
        <path d="M23 1v10h10" fill="#e2e2e2" stroke="#bbb" />
        <Compass x={20} y={21} r={9} />
      </Art>
    ),
  },
  { name: "Web page 1", art: <Thumb bar="#7fae5b" kind="safari" /> },
  { name: "Web page 2", art: <Thumb bar="#ececec" kind="safari" /> },
  { name: "Web page 3", art: <Thumb bar="#98b94d" side="#6a4d9c" kind="safari" /> },
  { name: "Web page 4", art: <Thumb bar="#f4f4f4" side="#2c3038" kind="safari" /> },
  { name: "Layout", art: <Thumb bar="#dde4f2" side="#8fa6d4" kind="id" /> },
  { name: "Web page 5", art: <Thumb bar="#b03440" kind="safari" /> },
  { name: "Web page 6", art: <Thumb bar="#cfe0d9" kind="safari" /> },
  { name: "Web page 7", art: <Thumb bar="#a9d6e6" page="#dff2f8" kind="safari" /> },
  { name: "Document 1", art: <Thumb bar="#e6e6e6" kind="word" /> },
  { name: "Document 2", art: <Thumb bar="#e6e6e6" kind="word" /> },
  {
    name: "Trash",
    art: (
      <Art>
        <path d="M5 6h30l-4 31q-11 4-22 0z" fill="#5f6266" />
        <path d="M8 8l4 30M13 9l3 30M19 9v30M26 9l-3 30M32 8l-4 30M6 15h28M7 20h26M8 25h24M9 30h22M9 34h21" stroke="#aeb1b5" strokeWidth=".8" />
        <ellipse cx="20" cy="6" rx="15" ry="4" fill="#84878b" stroke="#dcdee0" strokeWidth="1.800" />
        <path d="m9 6 5-3 5 2 5-2 7 4-5 4-6-1-6 1z" fill="#f4f4f4" />
        <path d="M9 37q11 4 22 0" stroke="#e0e2e4" strokeWidth="2" fill="none" />
      </Art>
    ),
  },
];

/* ---------- App ---------- */

const menus = ["Word", "File", "Edit", "View", "Insert", "Format", "Font", "Tools", "Table", "Window", "Work", "Help"];
const documentLines = ["WIRE RINGS 25% OFF", "", "", "SALE", "", "SALE", "", "$10 EARRINGS", "", "$10 PENDANTS"];
const effects = [
  ["Strikethrough", "Double strikethrough", "Superscript", "Subscript"],
  ["Shadow", "Outline", "Emboss", "Engrave"],
  ["Small caps", "All caps", "Hidden"],
];
const effectColumns = [0, 1, 2];

const FontList = ({ label, options, top, thumb }: { label: string; options: string[]; top?: number; thumb?: number }) => (
  <ListBox>
    <List size={5} defaultValue={options[0]} aria-label={label}>
      {options.map((o) => (
        <option key={o}>{o}</option>
      ))}
    </List>
    <ListTrack $top={top}>{thumb && <ListThumb $h={thumb} />}</ListTrack>
  </ListBox>
);

const EffectColumn = styled.div`
  grid-row: 1 / -1;
`;

const FontDialog = () => (
  <Dialog role="dialog" aria-labelledby="font-title">
    <DialogTitle id="font-title">Font</DialogTitle>
    <DialogBody onSubmit={(e) => e.preventDefault()}>
      <TabRow>
        <TabButton type="button" $on>Font</TabButton>
        <TabButton type="button">Character Spacing</TabButton>
      </TabRow>
      <Panel>
        <Fields>
          <Field>
            <Label htmlFor="font">Font:</Label>
            <TextBox $focus>
              <TextInput id="font" defaultValue="CrackerJack Regular" />
              <InsertionPoint />
            </TextBox>
            <FontList
              label="Fonts"
              options={["CrackerJack Regular", "Curlz MT", "Damascus", "Damascus Medium", "Damascus Semi Bold"]}
              top={20}
              thumb={19}
            />
          </Field>
          <Field>
            <Label htmlFor="style">Font style:</Label>
            <TextBox $right={14}>
              <TextInput id="style" defaultValue="Regular" />
            </TextBox>
            <FontList label="Font styles" options={["Regular", "Italic", "Bold", "Bold Italic"]} />
          </Field>
          <Field>
            <Label htmlFor="size">Size:</Label>
            <TextBox $right={15}>
              <TextInput id="size" defaultValue="20" />
            </TextBox>
            <FontList label="Sizes" options={["20", "22", "24", "26", "28"]} top={53} thumb={28} />
          </Field>
        </Fields>
        <Popups>
          <Field>
            <Label htmlFor="color">Font color:</Label>
            <PopupShell>
              <Popup id="color" $pad={33}>
                <option>Automatic</option>
              </Popup>
              <PopupArrows><Arrows /></PopupArrows>
            </PopupShell>
          </Field>
          <Field>
            <Label htmlFor="underline">Underline style:</Label>
            <PopupShell $kind="aqua">
              <Popup id="underline" $pad={16}>
                <option>(none)</option>
              </Popup>
              <PopupArrows $aqua><Arrows /></PopupArrows>
            </PopupShell>
          </Field>
          <Field>
            <Label htmlFor="ucolor" $dim>Underline color:</Label>
            <PopupShell $kind="dim">
              <Popup id="ucolor" $pad={33} disabled>
                <option>Automatic</option>
              </Popup>
              <PopupArrows><Arrows /></PopupArrows>
            </PopupShell>
          </Field>
        </Popups>
        <SectionTitle $top={9}>Effects</SectionTitle>
        <Effects>
          {effectColumns.map((c) => (
            <EffectColumn key={c}>
              {effects[c].map((name) => (
                <Check key={name}>
                  <CheckBox type="checkbox" />
                  {name}
                </Check>
              ))}
            </EffectColumn>
          ))}
        </Effects>
        <SectionTitle $top={11}>Advanced</SectionTitle>
        <Advanced>
          <Check>
            <CheckBox type="checkbox" />
            Enable all ligatures in document
          </Check>
        </Advanced>
        <SectionTitle $top={8}>Preview</SectionTitle>
        <Preview>
          <Baseline />
          CRACKERJACK REGULAR
          <Baseline />
        </Preview>
      </Panel>
      <Buttons>
        <PushButton type="button" $w={116} $start>Default...</PushButton>
        <PushButton type="button" $w={95}>Cancel</PushButton>
        <PushButton $w={93} $primary>OK</PushButton>
      </Buttons>
    </DialogBody>
  </Dialog>
);

export default function App() {
  return (
    <Desktop>
      <GlobalStyle />
      <MenuBar>
        <MenuGroup>
          <AppleButton aria-label="Apple menu"><Apple /></AppleButton>
          {menus.map((m) => (
            <MenuItem key={m} $bold={m === "Word"} $active={m === "Format"}>{m}</MenuItem>
          ))}
          <StatusIcon aria-label="Scripts"><ScriptGlyph /></StatusIcon>
        </MenuGroup>
        <StatusGroup>
          <StatusIcon aria-label="Dropbox"><Dropbox /></StatusIcon>
          <StatusIcon aria-label="Norton"><Norton /></StatusIcon>
          <StatusIcon aria-label="Time Machine"><TimeMachineGlyph /></StatusIcon>
          <StatusIcon aria-label="Bluetooth"><Bluetooth /></StatusIcon>
          <StatusIcon aria-label="Wi-Fi"><Wifi /></StatusIcon>
          <StatusIcon aria-label="Volume"><Volume /></StatusIcon>
          <Percent>100%</Percent>
          <Battery />
          <Clock>Mon 10:46 AM</Clock>
          <StatusIcon $wide aria-label="Search"><Search /></StatusIcon>
          <StatusIcon aria-label="Notifications"><ListGlyph /></StatusIcon>
        </StatusGroup>
      </MenuBar>

      <WindowStack>
        <BackWindowEdge />
        <WordWindow>
          <WindowTop>
            <Lights>
              <Light $dot aria-label="Close" />
              <Light aria-label="Minimize" />
              <Light aria-label="Zoom" />
            </Lights>
            <Tools>
              {tools.map((t) => (
                <React.Fragment key={t.name}>
                  <Tool $w={t.w}>
                    <ToolIcon>
                      {toolIcons[t.name]}
                      {t.caret && <Caret />}
                    </ToolIcon>
                    {t.name}
                  </Tool>
                  {t.gap && <Divider />}
                </React.Fragment>
              ))}
            </Tools>
          </WindowTop>
          <ElementsBar>
            <ElementsTab>Document Elements</ElementsTab>
          </ElementsBar>
          <Body>
            <Work>
              <RulerRow>
                <TabPicker aria-label="Tab stop">
                  <svg width="16" height="16" viewBox="0 0 16 16">
                    <path d="M3 13V5h5" stroke="#000" strokeWidth="2" fill="none" />
                    <path d="m7 1 4 4-4 4zM10 11h6l-3 4z" />
                  </svg>
                </TabPicker>
                <RulerBox><HorizontalRuler /></RulerBox>
              </RulerRow>
              <Canvas>
                <SideRuler><VerticalRuler /></SideRuler>
                <Page>
                  {documentLines.map((l, i) => (
                    <Line key={i}>{l}</Line>
                  ))}
                </Page>
              </Canvas>
            </Work>
            <ScrollColumn>
              <SplitHandle aria-label="Split" />
              <VThumb />
              <Browse>
                <BrowseButton aria-label="Previous page">
                  <svg width="10" height="12" viewBox="0 0 10 12" fill="#8c8c8c"><path d="M5 0l4 5H1zM5 6l4 5H1z" /></svg>
                </BrowseButton>
                <BrowseButton aria-label="Browse object">
                  <svg width="12" height="12" viewBox="0 0 12 12"><circle cx="6" cy="6" r="4.500" fill="#ddd" stroke="#888" strokeWidth="1.600" /></svg>
                </BrowseButton>
                <BrowseButton aria-label="Next page">
                  <svg width="10" height="12" viewBox="0 0 10 12" fill="#8c8c8c"><path d="M5 5l4-5H1zM5 11l4-5H1z" /></svg>
                </BrowseButton>
              </Browse>
            </ScrollColumn>
          </Body>
          <Bottom>
            <Views>
              <ViewGroup>
                {viewIcons.map(([name, drawing], i) => (
                  <ViewButton key={name} $on={i === 3} aria-label={name}>
                    <svg width="24" height="19" viewBox="0 0 24 19" fill="none" stroke="#858585" strokeWidth="1.500">{drawing}</svg>
                  </ViewButton>
                ))}
              </ViewGroup>
            </Views>
            <BottomRight>
              <HTrack><HThumb /></HTrack>
              <StatusBar>
                <svg width="16" height="16" viewBox="0 0 16 16" stroke="#777" strokeWidth="1.500"><path d="M1 15 15 1M6 15l9-9M11 15l4-4" /></svg>
              </StatusBar>
            </BottomRight>
          </Bottom>
        </WordWindow>
      </WindowStack>

      <DockBar aria-label="Dock">
        {dockApps.map((a) => (
          <DockItem key={a.name} aria-label={a.name} $glow={a.glow} $running={a.running}>{a.art}</DockItem>
        ))}
        <DockGap>
          <svg width="8" height="24" viewBox="0 0 8 24"><path d="m1 0 6 23" stroke="#858c98" /></svg>
        </DockGap>
        {dockDocs.map((d) => (
          <DockItem key={d.name} aria-label={d.name}>{d.art}</DockItem>
        ))}
      </DockBar>

      <FontDialog />
    </Desktop>
  );
}
